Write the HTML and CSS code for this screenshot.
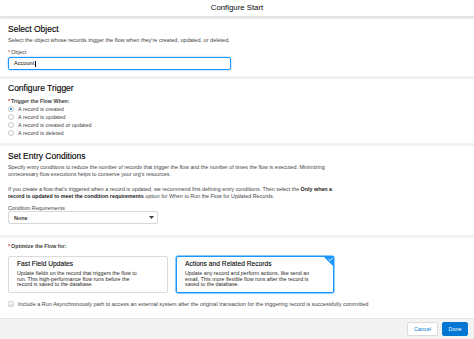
FILE: index.html
```html
<!DOCTYPE html>
<html lang="en">
<head>
  <meta charset="UTF-8">
  <title>Configure Start</title>
  <link rel="stylesheet" href="styles.css">
</head>
<body>
  <div class="modal">
    <header class="modal-header">
      <h1 class="modal-title">Configure Start</h1>
    </header>

    <div class="modal-body">
      <!-- Object -->
      <section class="panel panel-object">
        <h2 class="panel-title">Select Object</h2>
        <p class="help">Select the object whose records trigger the flow when they're created, updated, or deleted.</p>
        <div class="field-label"><span class="req">*</span>Object</div>
        <div class="text-input is-focused">Account<span class="caret"></span></div>
      </section>

      <!-- Trigger -->
      <section class="panel panel-trigger">
        <h2 class="panel-title">Configure Trigger</h2>
        <div class="field-label strong"><span class="req">*</span>Trigger the Flow When:</div>
        <ul class="radio-list">
          <li class="radio is-checked"><span class="radio-dot"></span>A record is created</li>
          <li class="radio"><span class="radio-dot"></span>A record is updated</li>
          <li class="radio"><span class="radio-dot"></span>A record is created or updated</li>
          <li class="radio"><span class="radio-dot"></span>A record is deleted</li>
        </ul>
      </section>

      <!-- Entry conditions -->
      <section class="panel panel-conditions">
        <h2 class="panel-title">Set Entry Conditions</h2>
        <p class="help para">Specify entry conditions to reduce the number of records that trigger the flow and the number of times the flow is executed. Minimizing<br>unnecessary flow executions helps to conserve your org's resources.</p>
        <p class="help para second">If you create a flow that's triggered when a record is updated, we recommend first defining entry conditions. Then select the <b>Only when a<br>record is updated to meet the condition requirements</b> option for When to Run the Flow for Updated Records.</p>
        <div class="field-label cond-label">Condition Requirements</div>
        <div class="select">
          <span>None</span>
          <svg class="select-arrow" width="5" height="3" viewBox="0 0 10 6"><path d="M0 0h10L5 6z" fill="#3e3e3c"/></svg>
        </div>
      </section>

      <!-- Optimize -->
      <section class="panel panel-optimize">
        <div class="field-label strong"><span class="req">*</span>Optimize the Flow for:</div>
        <div class="tiles">
          <div class="tile">
            <div class="tile-title">Fast Field Updates</div>
            <p class="tile-text">Update fields on the record that triggers the flow to<br>run. This high-performance flow runs before the<br>record is saved to the database.</p>
          </div>
          <div class="tile is-selected">
            <div class="tile-title">Actions and Related Records</div>
            <p class="tile-text">Update any record and perform actions, like send an<br>email. This more flexible flow runs after the record is<br>saved to the database.</p>
            <span class="tile-corner">
              <svg width="11" height="11" viewBox="0 0 11 11"><path d="M0 0h11v11z" fill="#1b96ff"/><path d="M5.6 3.2l1.5 1.5 2.6-2.8" fill="none" stroke="#fff" stroke-width="0.9"/></svg>
            </span>
          </div>
        </div>
        <label class="checkbox">
          <span class="check-box">
            <svg width="6" height="6" viewBox="0 0 6 6"><path d="M1.4 3.1l1.1 1.1 2.2-2.4" fill="none" stroke="#6b9bd1" stroke-width="0.8"/></svg>
          </span>
          Include a Run Asynchronously path to access an external system after the original transaction for the triggering record is successfully committed
        </label>
      </section>
    </div>

    <footer class="modal-footer">
      <button class="btn btn-neutral">Cancel</button>
      <button class="btn btn-brand">Done</button>
    </footer>
  </div>
</body>
</html>
```

FILE: styles.css
```css
/* Tokens */
:root {
  --brand: #0176d3;
  --brand-light: #1b96ff;
  --text: #181818;
  --text-weak: #444444;
  --border: #dddbda;
  --band: #f1f1f1;
}

html, body {
  margin: 0;
  padding: 0;
  background: #ffffff;
}

body {
  font-family: "Liberation Sans", Arial, sans-serif;
  color: var(--text);
  width: 474px;
  height: 339px;
  overflow: hidden;
}

p {
  margin: 0;
}

.modal {
  display: flex;
  flex-direction: column;
  height: 339px;
}

/* Header */
.modal-header {
  height: 16px;
  border-bottom: 1px solid #e2e2e2;
  box-shadow: 0 1px 2px rgba(0, 0, 0, 0.06);
  display: flex;
  align-items: center;
  justify-content: center;
  position: relative;
  z-index: 1;
}

.modal-title {
  margin: 0;
  font-size: 7.8px;
  font-weight: normal;
  color: #080707;
  line-height: 10px;
}

/* Body */
.modal-body {
  flex: 1;
  display: flex;
  flex-direction: column;
  gap: 3px;
  padding-top: 2px;
  background: var(--band);
}

.panel {
  background: #ffffff;
  padding: 0 8px;
}

.panel-title {
  margin: 0;
  font-size: 8.5px;
  font-weight: normal;
  line-height: 10px;
  color: #080707;
  -webkit-text-stroke: 0.15px #080707;
}

.help {
  font-size: 5.55px;
  line-height: 6.5px;
  color: var(--text-weak);
}

.help b {
  color: #222;
}

.field-label {
  font-size: 5.3px;
  line-height: 6.5px;
  color: var(--text-weak);
}

.field-label.strong {
  font-weight: bold;
  color: #3e3e3c;
}

.req {
  color: #c23934;
  margin-right: 1px;
}

/* Select object */
.panel-object {
  padding-top: 5px;
  padding-bottom: 6px;
}

.panel-object .help {
  margin-top: 2.5px;
}

.panel-object .field-label {
  margin-top: 5.5px;
}

.text-input {
  margin-top: 2px;
  height: 11px;
  width: 216px;
  padding-left: 5px;
  border: 1px solid var(--brand-light);
  border-radius: 2px;
  box-shadow: 0 0 2px rgba(27, 150, 255, 0.6);
  font-size: 5.6px;
  line-height: 11px;
  color: #080707;
  display: flex;
  align-items: center;
}

.caret {
  display: inline-block;
  width: 0.6px;
  height: 6px;
  background: #080707;
  margin-left: 0.3px;
}

/* Trigger */
.panel-trigger {
  padding-top: 4px;
  padding-bottom: 6px;
}

.panel-trigger .field-label {
  margin-top: 4.5px;
}

.radio-list {
  list-style: none;
  margin: 1px 0 0;
  padding: 0;
}

.radio {
  height: 8px;
  display: flex;
  align-items: center;
  gap: 4px;
  font-size: 5.5px;
  color: var(--text-weak);
}

.radio-dot {
  width: 4px;
  height: 4px;
  border: 0.7px solid #c9c9c9;
  border-radius: 50%;
  position: relative;
  flex: none;
}

.radio.is-checked .radio-dot::after {
  content: "";
  position: absolute;
  left: 1px;
  top: 1px;
  width: 2px;
  height: 2px;
  border-radius: 50%;
  background: var(--brand);
}

/* Conditions */
.panel-conditions {
  padding-top: 5px;
  padding-bottom: 11px;
}

.para {
  font-size: 5.35px;
  line-height: 6.6px;
  margin-top: 3.4px;
}

.para.second {
  margin-top: 8.4px;
}

.cond-label {
  margin-top: 6px;
  line-height: 6px;
}

.select {
  width: 150px;
  height: 13px;
  box-sizing: border-box;
  border: 1px solid #d8d8d8;
  border-radius: 2px;
  display: flex;
  align-items: center;
  justify-content: space-between;
  padding: 0 3px 0 5px;
  font-size: 5.4px;
  font-weight: bold;
  color: #3e3e3c;
}

/* Optimize */
.panel-optimize {
  flex: 1;
  padding-top: 5px;
}

.tiles {
  display: flex;
  gap: 8px;
  margin-top: 6.4px;
}

.tile {
  position: relative;
  width: 160px;
  height: 37px;
  box-sizing: border-box;
  border: 1px solid var(--border);
  border-radius: 2px;
  padding: 3px 8px 0;
}

.tile.is-selected {
  width: 158px;
  border-color: var(--brand-light);
  box-shadow: 0 0 0 0.5px var(--brand-light);
}

.tile-title {
  font-size: 6.7px;
  line-height: 8px;
  color: #080707;
  -webkit-text-stroke: 0.1px #080707;
}

.tile-text {
  margin-top: 3px;
  font-size: 5.35px;
  line-height: 5.5px;
  color: #2b2826;
}

.tile-corner {
  position: absolute;
  top: -1px;
  right: -1px;
  width: 11px;
  height: 11px;
}

.tile-corner svg {
  display: block;
}

.checkbox {
  margin-top: 7.5px;
  display: flex;
  align-items: center;
  gap: 4px;
  font-size: 5.5px;
  line-height: 7px;
  color: var(--text-weak);
}

.check-box {
  width: 6px;
  height: 6px;
  box-sizing: border-box;
  border: 0.6px solid #d8d8d8;
  border-radius: 1px;
  background: #f3f3f3;
  display: flex;
  flex: none;
}

/* Footer */
.modal-footer {
  height: 20px;
  border-top: 1px solid #e4e4e4;
  background: #f3f3f3;
  display: flex;
  justify-content: flex-end;
  align-items: center;
  gap: 4px;
  padding: 0 6px;
}

.btn {
  height: 14px;
  border-radius: 2px;
  font-family: inherit;
  font-size: 5.4px;
  padding: 0;
  cursor: pointer;
}

.btn-neutral {
  width: 31px;
  background: #ffffff;
  border: 1px solid #dddbda;
  color: var(--brand);
}

.btn-brand {
  width: 26px;
  background: var(--brand);
  border: 1px solid var(--brand);
  color: #ffffff;
}
```
